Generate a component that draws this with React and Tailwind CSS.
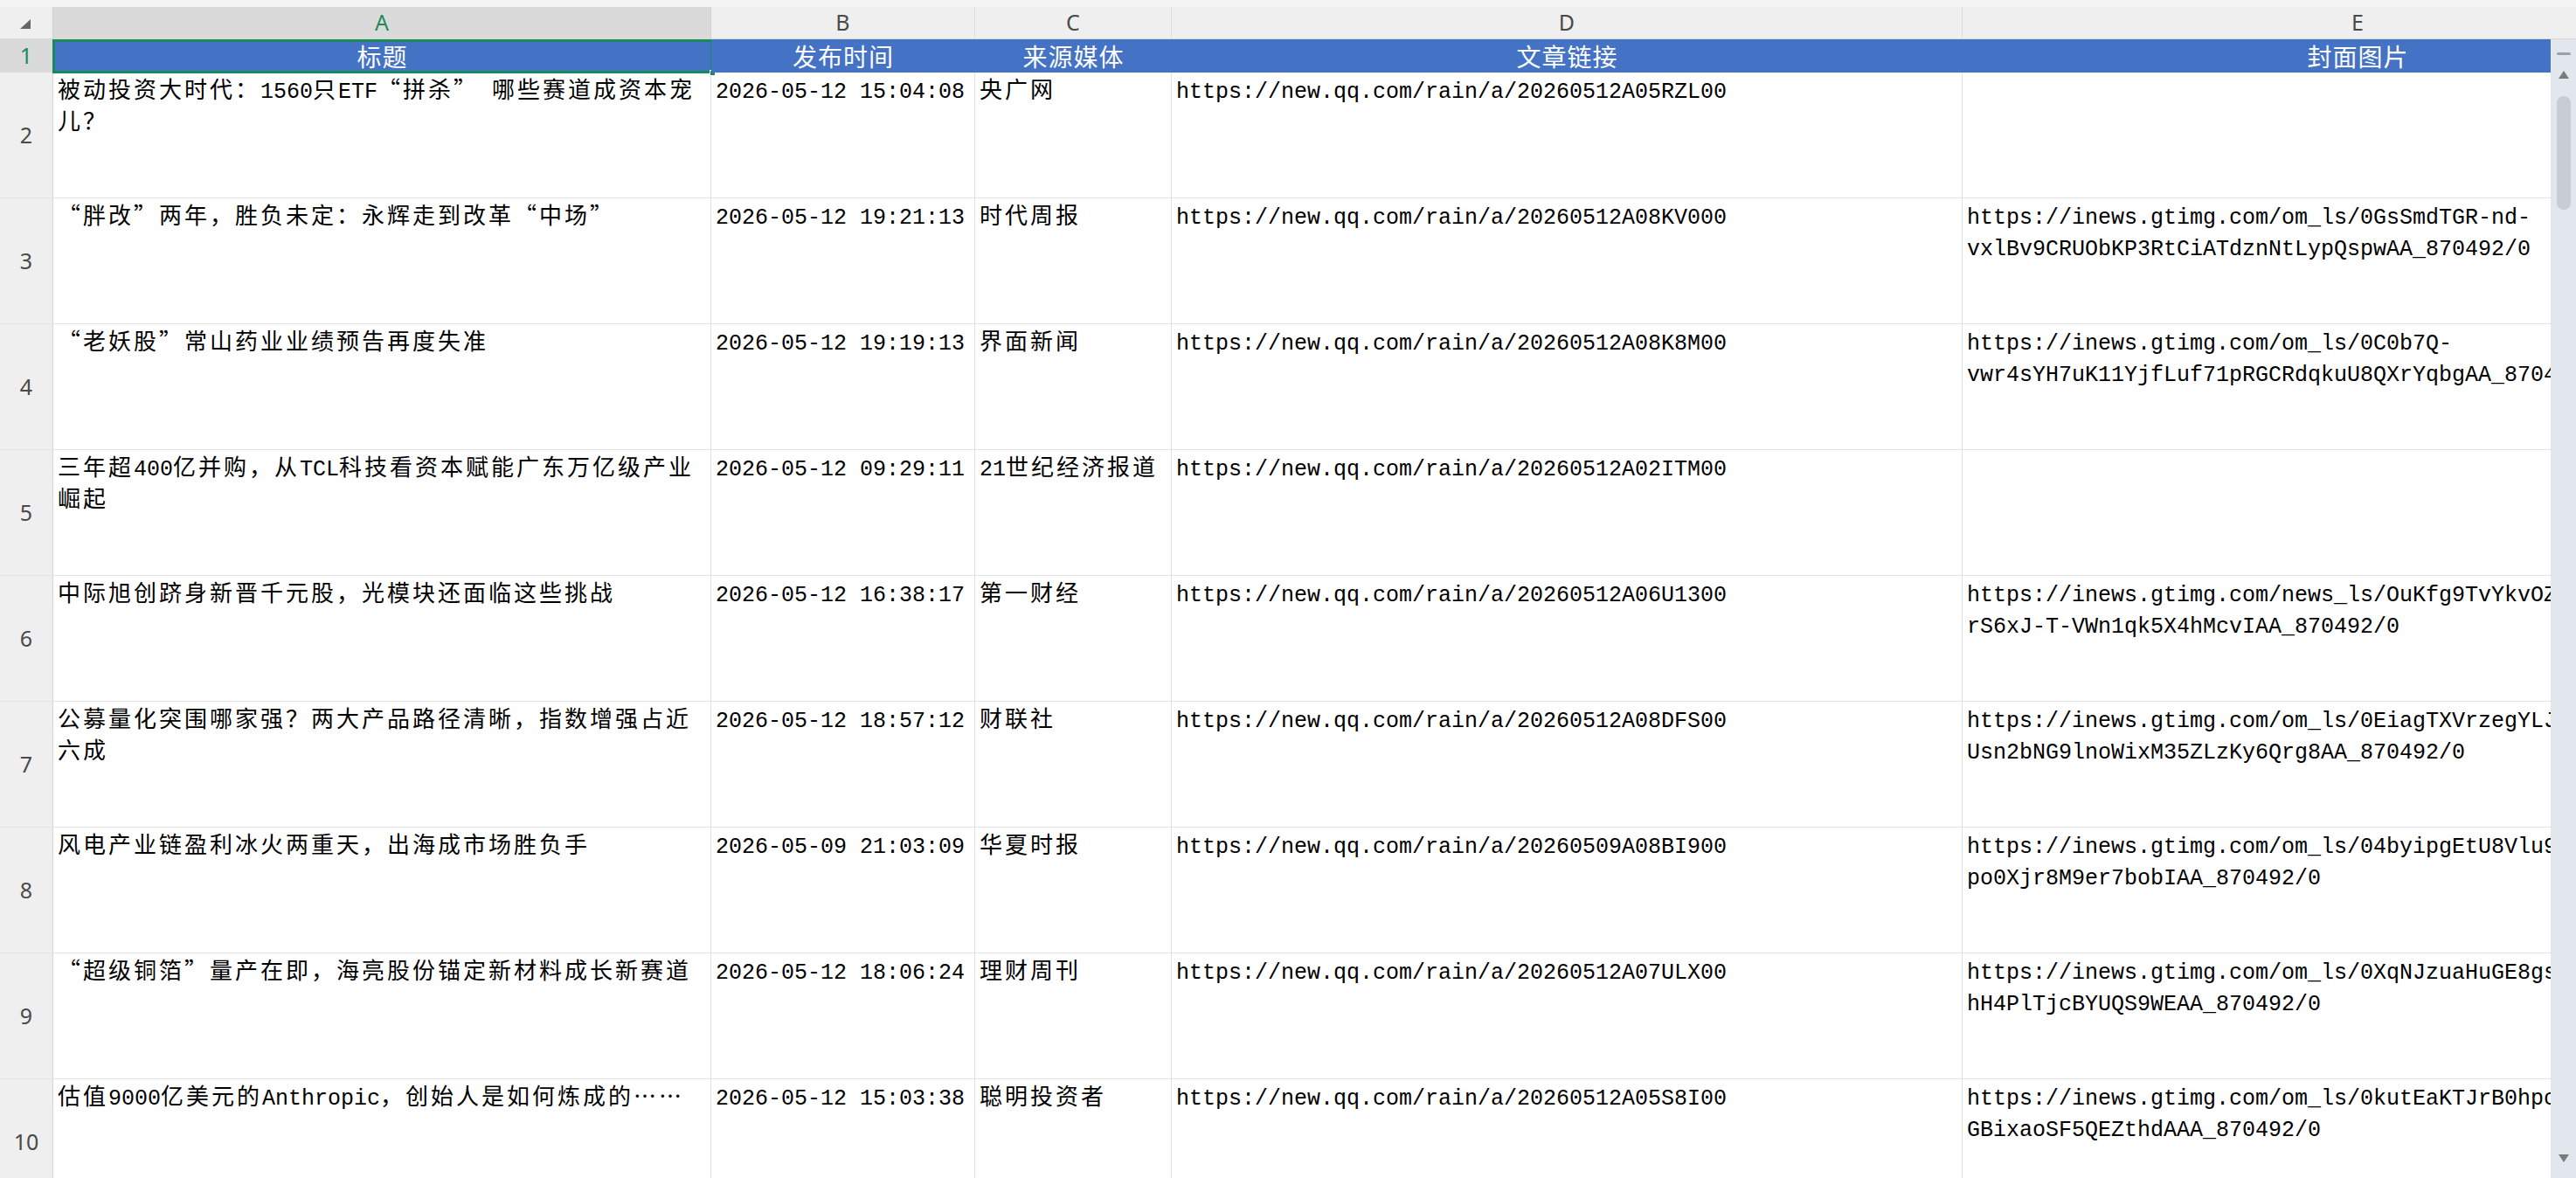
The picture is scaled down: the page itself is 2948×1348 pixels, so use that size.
import React from "react";

const CJK_RE = /([\u2000-\u206f\u3000-\u303f\u3400-\u9fff\uff00-\uffef]+)/;

function Txt({ s }) {
  const parts = s.split(CJK_RE);
  return (
    <>
      {parts.map((p, i) =>
        i % 2 === 1 ? (
          <span
            key={i}
            className="font-['Noto_Sans_CJK_SC',sans-serif] text-[26px] tracking-[3px] leading-none"
          >
            {p}
          </span>
        ) : (
          <React.Fragment key={i}>{p}</React.Fragment>
        )
      )}
    </>
  );
}

const Q = "https://new.qq.com/rain/a/";
const G = "https://inews.gtimg.com/";

const rows = [
  {
    n: 2,
    a: ["被动投资大时代：1560只ETF“拼杀” 哪些赛道成资本宠", "儿？"],
    b: "2026-05-12 15:04:08",
    c: "央广网",
    d: Q + "20260512A05RZL00",
    e: [],
  },
  {
    n: 3,
    a: ["“胖改”两年，胜负未定：永辉走到改革“中场”"],
    b: "2026-05-12 19:21:13",
    c: "时代周报",
    d: Q + "20260512A08KV000",
    e: [G + "om_ls/0GsSmdTGR-nd-", "vxlBv9CRUObKP3RtCiATdznNtLypQspwAA_870492/0"],
  },
  {
    n: 4,
    a: ["“老妖股”常山药业业绩预告再度失准"],
    b: "2026-05-12 19:19:13",
    c: "界面新闻",
    d: Q + "20260512A08K8M00",
    e: [G + "om_ls/0C0b7Q-", "vwr4sYH7uK11YjfLuf71pRGCRdqkuU8QXrYqbgAA_870492/0"],
  },
  {
    n: 5,
    a: ["三年超400亿并购，从TCL科技看资本赋能广东万亿级产业", "崛起"],
    b: "2026-05-12 09:29:11",
    c: "21世纪经济报道",
    d: Q + "20260512A02ITM00",
    e: [],
  },
  {
    n: 6,
    a: ["中际旭创跻身新晋千元股，光模块还面临这些挑战"],
    b: "2026-05-12 16:38:17",
    c: "第一财经",
    d: Q + "20260512A06U1300",
    e: [G + "news_ls/OuKfg9TvYkvOZ", "rS6xJ-T-VWn1qk5X4hMcvIAA_870492/0"],
  },
  {
    n: 7,
    a: ["公募量化突围哪家强？两大产品路径清晰，指数增强占近", "六成"],
    b: "2026-05-12 18:57:12",
    c: "财联社",
    d: Q + "20260512A08DFS00",
    e: [G + "om_ls/0EiagTXVrzegYLJ", "Usn2bNG9lnoWixM35ZLzKy6Qrg8AA_870492/0"],
  },
  {
    n: 8,
    a: ["风电产业链盈利冰火两重天，出海成市场胜负手"],
    b: "2026-05-09 21:03:09",
    c: "华夏时报",
    d: Q + "20260509A08BI900",
    e: [G + "om_ls/04byipgEtU8Vlu9", "po0Xjr8M9er7bobIAA_870492/0"],
  },
  {
    n: 9,
    a: ["“超级铜箔”量产在即，海亮股份锚定新材料成长新赛道"],
    b: "2026-05-12 18:06:24",
    c: "理财周刊",
    d: Q + "20260512A07ULX00",
    e: [G + "om_ls/0XqNJzuaHuGE8gs", "hH4PlTjcBYUQS9WEAA_870492/0"],
  },
  {
    n: 10,
    a: ["估值9000亿美元的Anthropic，创始人是如何炼成的……"],
    b: "2026-05-12 15:03:38",
    c: "聪明投资者",
    d: Q + "20260512A05S8I00",
    e: [G + "om_ls/0kutEaKTJrB0hpc", "GBixaoSF5QEZthdAAA_870492/0"],
  },
];

function Lines({ lines }) {
  return lines.map((l, i) => (
    <div key={i} className="whitespace-nowrap leading-[36px]">
      <Txt s={l} />
    </div>
  ));
}

function Cell({ w, lines }) {
  return (
    <div
      className={`${w} shrink-0 border-r border-[#e2e2e2] pl-[5px] pt-[5px] overflow-hidden`}
    >
      <Lines lines={lines} />
    </div>
  );
}

function ColHead({ w, label, selected }) {
  return (
    <div
      className={
        selected
          ? `${w} shrink-0 flex items-center justify-center bg-[#dadada] text-[#1a8a5a] border-r border-[#d0d0d0]`
          : `${w} shrink-0 flex items-center justify-center text-[#4a4a4a] border-r border-[#dcdcdc]`
      }
    >
      {label}
    </div>
  );
}

function BlueHead({ w, label, children }) {
  return (
    <div
      className={`${w} shrink-0 relative flex items-center justify-center bg-[#4472c4] text-white`}
    >
      <span className="font-['Noto_Sans_CJK_SC',sans-serif] text-[28px] tracking-[1px] leading-none">
        {label}
      </span>
      {children}
    </div>
  );
}

export default function App() {
  return (
    <div className="w-[2948px] h-[1348px] overflow-hidden flex flex-col bg-white font-['Liberation_Mono',monospace] text-[25px] text-black">
      <div className="h-[8px] shrink-0 bg-[#f3f3f3]" />
      {/* column header row */}
      <div className="h-[37px] shrink-0 flex bg-[#efefef] border-b border-[#d6d6d6] font-['Noto_Sans',sans-serif] text-[25px] overflow-hidden">
        <div className="w-[61px] shrink-0 flex items-end justify-end pr-[25px] pb-[11px] border-r border-[#d0d0d0]">
          <svg width="12" height="11" viewBox="0 0 12 11">
            <path d="M0 11 L12 0 L12 11 Z" fill="#666666" />
          </svg>
        </div>
        <ColHead w="w-[753px]" label="A" selected />
        <ColHead w="w-[302px]" label="B" />
        <ColHead w="w-[225px]" label="C" />
        <ColHead w="w-[905px]" label="D" />
        <ColHead w="w-[905px]" label="E" />
      </div>
      {/* body */}
      <div className="flex flex-1 min-h-0">
        <div className="flex-1 min-w-0 overflow-hidden">
          {/* row 1 */}
          <div className="h-[38px] flex">
            <div className="w-[61px] shrink-0 flex items-center justify-center bg-[#dadada] text-[#1a8a5a] border-r border-[#d0d0d0] font-['Noto_Sans',sans-serif] text-[25px]">
              1
            </div>
            <BlueHead w="w-[753px]" label="标题">
              <div className="absolute -left-[1px] top-0 -right-[2px] -bottom-[1px] border-[3px] border-[#1a8a5a] pointer-events-none" />
              <div className="absolute -right-[5px] -bottom-[4px] w-[7px] h-[7px] bg-[#1a8a5a] border border-white" />
            </BlueHead>
            <BlueHead w="w-[302px]" label="发布时间" />
            <BlueHead w="w-[225px]" label="来源媒体" />
            <BlueHead w="w-[905px]" label="文章链接" />
            <BlueHead w="w-[905px]" label="封面图片" />
          </div>
          {rows.map((r) => (
            <div key={r.n} className="h-[144px] flex border-b border-[#e2e2e2]">
              <div className="w-[61px] shrink-0 flex items-center justify-center bg-[#efefef] text-[#4a4a4a] border-r border-[#d4d4d4] font-['Noto_Sans',sans-serif] text-[25px]">
                {r.n}
              </div>
              <Cell w="w-[753px]" lines={r.a} />
              <Cell w="w-[302px]" lines={[r.b]} />
              <Cell w="w-[225px]" lines={[r.c]} />
              <Cell w="w-[905px]" lines={[r.d]} />
              <Cell w="w-[905px]" lines={r.e} />
            </div>
          ))}
        </div>
        {/* scrollbar */}
        <div className="w-[29px] shrink-0 bg-[#e1e7ed] flex flex-col items-center">
          <div className="mt-[15px] w-[16px] h-[3px] rounded-full bg-[#9aa0a6]" />
          <svg className="mt-[18px]" width="12" height="9" viewBox="0 0 12 9">
            <path d="M6 0 L12 9 L0 9 Z" fill="#7a7a7a" />
          </svg>
          <div className="mt-[20px] w-[16px] h-[130px] rounded-full bg-[#c8cdd3]" />
          <svg className="mt-auto mb-[18px]" width="12" height="9" viewBox="0 0 12 9">
            <path d="M0 0 L12 0 L6 9 Z" fill="#7a7a7a" />
          </svg>
        </div>
      </div>
    </div>
  );
}
